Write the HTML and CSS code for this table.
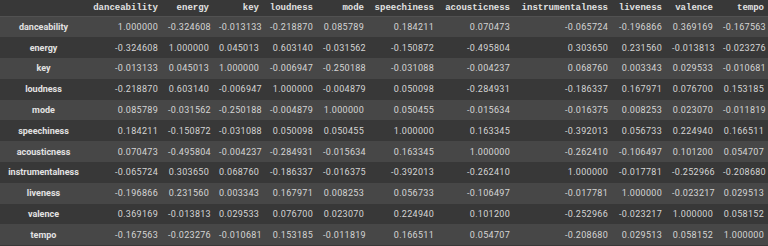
FILE: index.html
```html
<!DOCTYPE html>
<html lang="en">
<head>
    <meta charset="UTF-8">
    <meta name="viewport" content="width=device-width, initial-scale=1.0">
    <title>Correlation matrix</title>
    <link rel="stylesheet" href="styles.css">
</head>
<body>
<div class="output">
    <table class="dataframe">
        <colgroup>
            <col class="col-index">
            <col class="col-76">
            <col class="col-51">
            <col class="col-50">
            <col class="col-54">
            <col class="col-51">
            <col class="col-70">
            <col class="col-76">
            <col class="col-98">
            <col class="col-54">
            <col class="col-51">
            <col class="col-51">
        </colgroup>
        <thead>
        <tr>
            <th></th>
            <th>danceability</th>
            <th>energy</th>
            <th>key</th>
            <th>loudness</th>
            <th>mode</th>
            <th>speechiness</th>
            <th>acousticness</th>
            <th>instrumentalness</th>
            <th>liveness</th>
            <th>valence</th>
            <th>tempo</th>
        </tr>
        </thead>
        <tbody>
        <tr>
            <th>danceability</th>
            <td>1.000000</td><td>-0.324608</td><td>-0.013133</td><td>-0.218870</td><td>0.085789</td><td>0.184211</td><td>0.070473</td><td>-0.065724</td><td>-0.196866</td><td>0.369169</td><td>-0.167563</td>
        </tr>
        <tr>
            <th>energy</th>
            <td>-0.324608</td><td>1.000000</td><td>0.045013</td><td>0.603140</td><td>-0.031562</td><td>-0.150872</td><td>-0.495804</td><td>0.303650</td><td>0.231560</td><td>-0.013813</td><td>-0.023276</td>
        </tr>
        <tr>
            <th>key</th>
            <td>-0.013133</td><td>0.045013</td><td>1.000000</td><td>-0.006947</td><td>-0.250188</td><td>-0.031088</td><td>-0.004237</td><td>0.068760</td><td>0.003343</td><td>0.029533</td><td>-0.010681</td>
        </tr>
        <tr>
            <th>loudness</th>
            <td>-0.218870</td><td>0.603140</td><td>-0.006947</td><td>1.000000</td><td>-0.004879</td><td>0.050098</td><td>-0.284931</td><td>-0.186337</td><td>0.167971</td><td>0.076700</td><td>0.153185</td>
        </tr>
        <tr>
            <th>mode</th>
            <td>0.085789</td><td>-0.031562</td><td>-0.250188</td><td>-0.004879</td><td>1.000000</td><td>0.050455</td><td>-0.015634</td><td>-0.016375</td><td>0.008253</td><td>0.023070</td><td>-0.011819</td>
        </tr>
        <tr>
            <th>speechiness</th>
            <td>0.184211</td><td>-0.150872</td><td>-0.031088</td><td>0.050098</td><td>0.050455</td><td>1.000000</td><td>0.163345</td><td>-0.392013</td><td>0.056733</td><td>0.224940</td><td>0.166511</td>
        </tr>
        <tr>
            <th>acousticness</th>
            <td>0.070473</td><td>-0.495804</td><td>-0.004237</td><td>-0.284931</td><td>-0.015634</td><td>0.163345</td><td>1.000000</td><td>-0.262410</td><td>-0.106497</td><td>0.101200</td><td>0.054707</td>
        </tr>
        <tr>
            <th>instrumentalness</th>
            <td>-0.065724</td><td>0.303650</td><td>0.068760</td><td>-0.186337</td><td>-0.016375</td><td>-0.392013</td><td>-0.262410</td><td>1.000000</td><td>-0.017781</td><td>-0.252966</td><td>-0.208680</td>
        </tr>
        <tr>
            <th>liveness</th>
            <td>-0.196866</td><td>0.231560</td><td>0.003343</td><td>0.167971</td><td>0.008253</td><td>0.056733</td><td>-0.106497</td><td>-0.017781</td><td>1.000000</td><td>-0.023217</td><td>0.029513</td>
        </tr>
        <tr>
            <th>valence</th>
            <td>0.369169</td><td>-0.013813</td><td>0.029533</td><td>0.076700</td><td>0.023070</td><td>0.224940</td><td>0.101200</td><td>-0.252966</td><td>-0.023217</td><td>1.000000</td><td>0.058152</td>
        </tr>
        <tr>
            <th>tempo</th>
            <td>-0.167563</td><td>-0.023276</td><td>-0.010681</td><td>0.153185</td><td>-0.011819</td><td>0.166511</td><td>0.054707</td><td>-0.208680</td><td>0.029513</td><td>0.058152</td><td>1.000000</td>
        </tr>
        </tbody>
    </table>
</div>
</body>
</html>
```

FILE: styles.css
```css
html {
    height: 100%;
}
body {
    margin: 0;
    background-color: #383838;
    color: #d5d5d5;
    font-family: Roboto, 'Liberation Sans', Arial, sans-serif;
    overflow: hidden;
}
.dataframe {
    table-layout: fixed;
    width: 769px;
    border-collapse: collapse;
    border: none;
    font-size: 9px;
    letter-spacing: 0.3px;
    white-space: nowrap;
}
.col-index { width: 87px; }
.col-50 { width: 50px; }
.col-51 { width: 51px; }
.col-54 { width: 54px; }
.col-70 { width: 70px; }
.col-76 { width: 76px; }
.col-98 { width: 98px; }

.dataframe thead th {
    font-family: 'Liberation Mono', 'DejaVu Sans Mono', monospace;
    font-size: 9px;
    letter-spacing: 0;
    font-weight: bold;
    color: #e2e2e2;
    text-align: right;
    height: 16px;
    padding: 0 5px;
    border-bottom: 1px solid #515151;
    vertical-align: middle;
}
.dataframe tbody th {
    font-size: 9px;
    letter-spacing: 0;
    font-weight: bold;
    color: #e2e2e2;
    text-align: center;
    padding: 0 4px;
}
.dataframe td {
    text-align: right;
    padding: 0 5px;
}
.dataframe tbody tr {
    height: 20.8px;
}
.dataframe tbody tr:nth-child(odd) {
    background-color: #474747;
}
```
